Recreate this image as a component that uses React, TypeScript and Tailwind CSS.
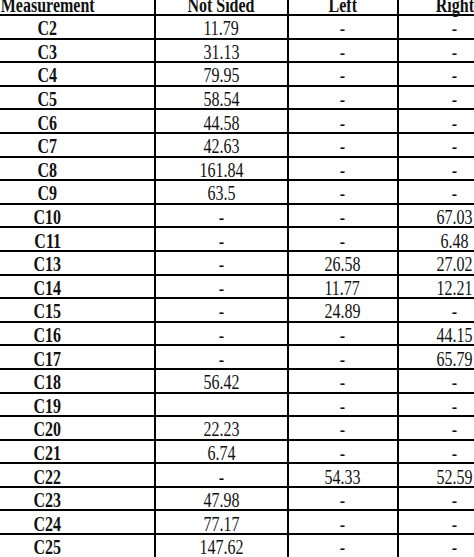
const rows: [string, string, string, string][] = [
  ["C2", "11.79", "-", "-"],
  ["C3", "31.13", "-", "-"],
  ["C4", "79.95", "-", "-"],
  ["C5", "58.54", "-", "-"],
  ["C6", "44.58", "-", "-"],
  ["C7", "42.63", "-", "-"],
  ["C8", "161.84", "-", "-"],
  ["C9", "63.5", "-", "-"],
  ["C10", "-", "-", "67.03"],
  ["C11", "-", "-", "6.48"],
  ["C13", "-", "26.58", "27.02"],
  ["C14", "-", "11.77", "12.21"],
  ["C15", "-", "24.89", "-"],
  ["C16", "-", "-", "44.15"],
  ["C17", "-", "-", "65.79"],
  ["C18", "56.42", "-", "-"],
  ["C19", "", "-", "-"],
  ["C20", "22.23", "-", "-"],
  ["C21", "6.74", "-", "-"],
  ["C22", "-", "54.33", "52.59"],
  ["C23", "47.98", "-", "-"],
  ["C24", "77.17", "-", "-"],
  ["C25", "147.62", "-", "-"],
];

// the source table is squeezed horizontally, so glyphs are narrowed
function Txt({ children }: { children: string }) {
  return <span className="inline-block origin-center scale-x-[0.8] whitespace-nowrap">{children}</span>;
}

function Row({ cells, header }: { cells: string[]; header?: boolean }) {
  const w = header ? "font-bold" : "";
  const pad = header ? "pt-[4px]" : "pt-[3px]";
  return (
    <div className="flex h-[23.6px] shrink-0 border-b-2 border-black">
      <div className={`flex w-[215px] shrink-0 items-center justify-center border-r-2 border-black font-bold ${pad}`}>
        <Txt>{cells[0]}</Txt>
      </div>
      <div className={`flex w-[132.5px] shrink-0 items-center justify-center border-r-2 border-black ${pad} ${w}`}>
        <Txt>{cells[1]}</Txt>
      </div>
      <div className={`flex w-[110.2px] shrink-0 items-center justify-center border-r-2 border-black ${pad} ${w}`}>
        <Txt>{cells[2]}</Txt>
      </div>
      <div className={`flex w-[112px] shrink-0 items-center justify-center ${pad} ${w}`}>
        <Txt>{cells[3]}</Txt>
      </div>
    </div>
  );
}

export default function App() {
  return (
    <div className="h-[557px] w-[474px] overflow-hidden bg-white text-[20px] leading-none text-[#111] [font-family:'Liberation_Serif',serif]">
      <div className="ml-[-59px] mt-[-7.6px] flex w-[570px] flex-col">
        <Row cells={["Measurement", "Not Sided", "Left", "Right"]} header />
        {rows.map((r) => (
          <Row key={r[0]} cells={r} />
        ))}
      </div>
    </div>
  );
}
